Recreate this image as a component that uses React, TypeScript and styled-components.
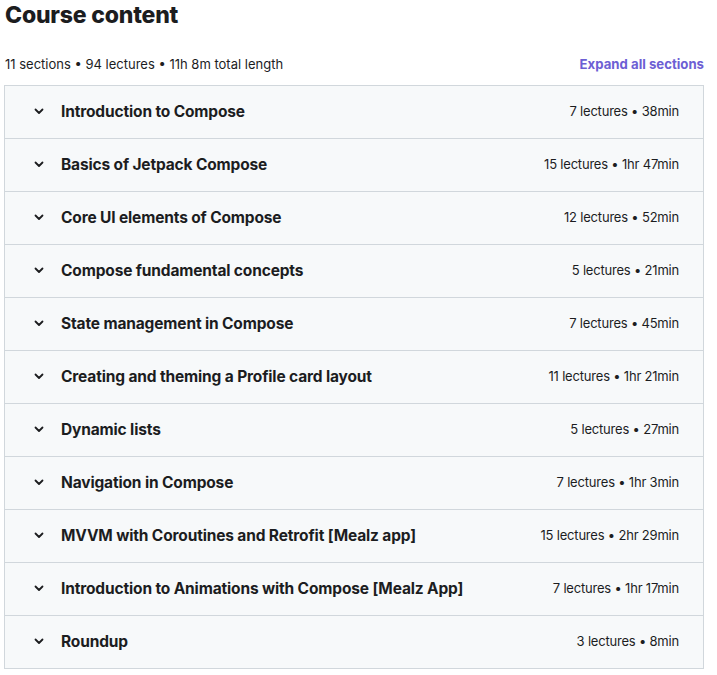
import * as React from 'react';
import styled, {createGlobalStyle} from 'styled-components';

interface Section {
  title: string;
  lectures: number;
  length: string;
}

const sections: Section[] = [
  {title: 'Introduction to Compose', lectures: 7, length: '38min'},
  {title: 'Basics of Jetpack Compose', lectures: 15, length: '1hr 47min'},
  {title: 'Core UI elements of Compose', lectures: 12, length: '52min'},
  {title: 'Compose fundamental concepts', lectures: 5, length: '21min'},
  {title: 'State management in Compose', lectures: 7, length: '45min'},
  {title: 'Creating and theming a Profile card layout', lectures: 11, length: '1hr 21min'},
  {title: 'Dynamic lists', lectures: 5, length: '27min'},
  {title: 'Navigation in Compose', lectures: 7, length: '1hr 3min'},
  {title: 'MVVM with Coroutines and Retrofit [Mealz app]', lectures: 15, length: '2hr 29min'},
  {title: 'Introduction to Animations with Compose [Mealz App]', lectures: 7, length: '1hr 17min'},
  {title: 'Roundup', lectures: 3, length: '8min'},
];

const GlobalStyle = createGlobalStyle`
  body {
    margin: 0;
    background: #ffffff;
    font-family: Inter, "Noto Sans", sans-serif;
    color: #1c1d1f;
  }
`;

const Page = styled.div`
  box-sizing: border-box;
  width: 717px;
  padding: 0 13px 0 4px;
`;

const Heading = styled.h2`
  margin: 0 0 0 1px;
  padding-top: 1px;
  font-size: 23px;
  line-height: 29px;
  font-weight: 800;
  letter-spacing: -0.2px;
  color: #1c1d1f;
`;

const SummaryBar = styled.div`
  display: flex;
  align-items: center;
  justify-content: space-between;
  height: 55px;
  box-sizing: border-box;
`;

const Summary = styled.span`
  margin: 13px 0 0 1px;
  font-size: 13px;
  color: #1c1d1f;
`;

const ExpandLink = styled.button`
  border: 0;
  background: none;
  padding: 0;
  margin-top: 13px;
  font-family: inherit;
  font-size: 13.2px;
  font-weight: 700;
  color: #6d5fd4;
  cursor: pointer;
`;

const Accordion = styled.div`
  border: 1px solid #d1d7dc;
  border-bottom: 0;
`;

const Row = styled.div`
  box-sizing: border-box;
  display: flex;
  align-items: center;
  height: 53px;
  padding: 0 24px 2px 28px;
  background: #f7f9fa;
  border-bottom: 1px solid #d1d7dc;
`;

const Chevron = styled.span`
  display: flex;
  width: 12px;
  margin-right: 16px;
  color: #1c1d1f;
`;

const Title = styled.span`
  flex: 1;
  font-size: 15.5px;
  font-weight: 700;
  letter-spacing: -0.15px;
  color: #1c1d1f;
`;

const Meta = styled.span`
  font-size: 13px;
  letter-spacing: -0.2px;
  color: #1c1d1f;
`;

const ChevronIcon = (): JSX.Element => (
  <svg width="12" height="12" viewBox="0 0 12 12">
    <path d="M2.5 4.5 L6 8 L9.5 4.5" fill="none" stroke="currentColor" strokeWidth="1.8" strokeLinecap="round" strokeLinejoin="round" />
  </svg>
);

export default function App(): JSX.Element {
  return (
    <Page>
      <GlobalStyle />
      <Heading>Course content</Heading>
      <SummaryBar>
        <Summary>11 sections • 94 lectures • 11h 8m total length</Summary>
        <ExpandLink>Expand all sections</ExpandLink>
      </SummaryBar>
      <Accordion>
        {sections.map((s) => (
          <Row key={s.title}>
            <Chevron><ChevronIcon /></Chevron>
            <Title>{s.title}</Title>
            <Meta>{s.lectures} lectures • {s.length}</Meta>
          </Row>
        ))}
      </Accordion>
    </Page>
  );
}
